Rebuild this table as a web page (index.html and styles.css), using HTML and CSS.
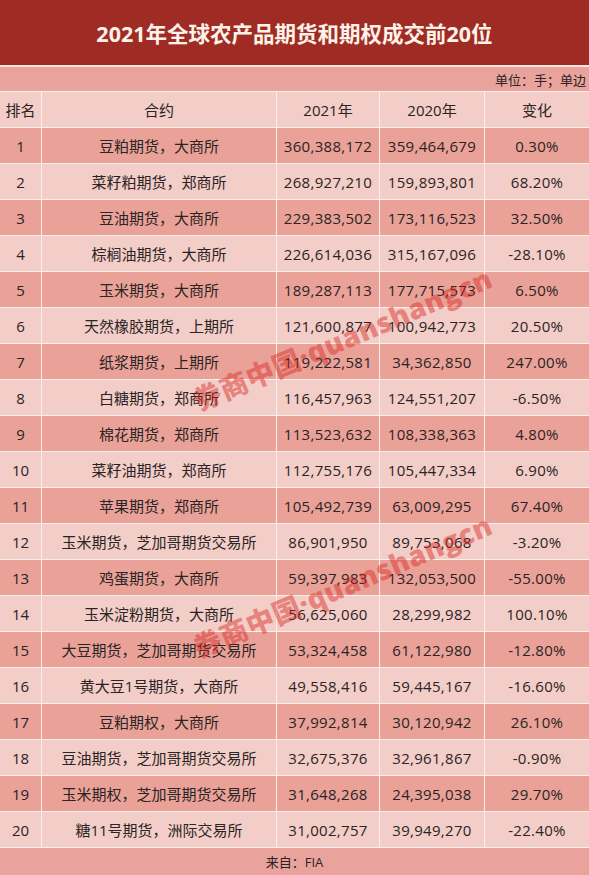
FILE: index.html
```html
<!DOCTYPE html>
<html>
<head>
  <meta charset="utf-8">
  <title>2021年全球农产品期货和期权成交前20位</title>
  <link rel="stylesheet" href="styles.css">
</head>
<body>
  <div class="sheet">
    <div class="title">2021年全球农产品期货和期权成交前20位</div>
    <div class="unit">单位：手；单边</div>

    <div class="board">
      <div class="row head">
        <div>排名</div><div>合约</div><div>2021年</div><div>2020年</div><div>变化</div>
      </div>
      <div class="row"><div>1</div><div>豆粕期货，大商所</div><div class="num">360,388,172</div><div class="num">359,464,679</div><div class="num">0.30%</div></div>
      <div class="row"><div>2</div><div>菜籽粕期货，郑商所</div><div class="num">268,927,210</div><div class="num">159,893,801</div><div class="num">68.20%</div></div>
      <div class="row"><div>3</div><div>豆油期货，大商所</div><div class="num">229,383,502</div><div class="num">173,116,523</div><div class="num">32.50%</div></div>
      <div class="row"><div>4</div><div>棕榈油期货，大商所</div><div class="num">226,614,036</div><div class="num">315,167,096</div><div class="num">-28.10%</div></div>
      <div class="row"><div>5</div><div>玉米期货，大商所</div><div class="num">189,287,113</div><div class="num">177,715,573</div><div class="num">6.50%</div></div>
      <div class="row"><div>6</div><div>天然橡胶期货，上期所</div><div class="num">121,600,877</div><div class="num">100,942,773</div><div class="num">20.50%</div></div>
      <div class="row"><div>7</div><div>纸浆期货，上期所</div><div class="num">119,222,581</div><div class="num">34,362,850</div><div class="num">247.00%</div></div>
      <div class="row"><div>8</div><div>白糖期货，郑商所</div><div class="num">116,457,963</div><div class="num">124,551,207</div><div class="num">-6.50%</div></div>
      <div class="row"><div>9</div><div>棉花期货，郑商所</div><div class="num">113,523,632</div><div class="num">108,338,363</div><div class="num">4.80%</div></div>
      <div class="row"><div>10</div><div>菜籽油期货，郑商所</div><div class="num">112,755,176</div><div class="num">105,447,334</div><div class="num">6.90%</div></div>
      <div class="row"><div>11</div><div>苹果期货，郑商所</div><div class="num">105,492,739</div><div class="num">63,009,295</div><div class="num">67.40%</div></div>
      <div class="row"><div>12</div><div>玉米期货，芝加哥期货交易所</div><div class="num">86,901,950</div><div class="num">89,753,068</div><div class="num">-3.20%</div></div>
      <div class="row"><div>13</div><div>鸡蛋期货，大商所</div><div class="num">59,397,983</div><div class="num">132,053,500</div><div class="num">-55.00%</div></div>
      <div class="row"><div>14</div><div>玉米淀粉期货，大商所</div><div class="num">56,625,060</div><div class="num">28,299,982</div><div class="num">100.10%</div></div>
      <div class="row"><div>15</div><div>大豆期货，芝加哥期货交易所</div><div class="num">53,324,458</div><div class="num">61,122,980</div><div class="num">-12.80%</div></div>
      <div class="row"><div>16</div><div>黄大豆1号期货，大商所</div><div class="num">49,558,416</div><div class="num">59,445,167</div><div class="num">-16.60%</div></div>
      <div class="row"><div>17</div><div>豆粕期权，大商所</div><div class="num">37,992,814</div><div class="num">30,120,942</div><div class="num">26.10%</div></div>
      <div class="row"><div>18</div><div>豆油期货，芝加哥期货交易所</div><div class="num">32,675,376</div><div class="num">32,961,867</div><div class="num">-0.90%</div></div>
      <div class="row"><div>19</div><div>玉米期权，芝加哥期货交易所</div><div class="num">31,648,268</div><div class="num">24,395,038</div><div class="num">29.70%</div></div>
      <div class="row"><div>20</div><div>糖11号期货，洲际交易所</div><div class="num">31,002,757</div><div class="num">39,949,270</div><div class="num">-22.40%</div></div>
    </div>

    <div class="source">来自：FIA</div>

    <!-- 水印 -->
    <div class="watermark wm-top">券商中国·quanshangcn</div>
    <div class="watermark wm-bottom">券商中国·quanshangcn</div>
  </div>
</body>
</html>
```

FILE: styles.css
```css
body {
  margin: 0;
  background: #fbefeb;
  font-family: "Open Sans", "Noto Sans CJK SC", sans-serif;
  color: #2a2424;
}

.sheet {
  position: relative;
  width: 589px;
  height: 875px;
  overflow: hidden;
  background: #fbefeb;
}

.title {
  height: 65px;
  display: flex;
  align-items: center;
  justify-content: center;
  background: #9e2c25;
  color: #fff2e8;
  font-size: 21.5px;
  font-weight: bold;
  border-bottom: 2px solid #f7e6e0;
}

.unit {
  height: 24px;
  display: flex;
  align-items: center;
  justify-content: flex-end;
  padding-right: 3px;
  background: #e9a39c;
  font-size: 13px;
}

.board {
  border-top: 1px solid #fbefeb;
}

.row {
  display: grid;
  grid-template-columns: 41px 234px 102px 104px 1fr;
  gap: 1px;
  margin-bottom: 1px;
  font-size: 15px;
}

.row > div {
  height: 35px;
  display: flex;
  align-items: center;
  justify-content: center;
  background: #f3cdc8;
  white-space: nowrap;
}

.row:nth-child(even) > div {
  background: #e9a198;
}

.row .num {
  letter-spacing: 0.3px;
}

.source {
  height: 27px;
  display: flex;
  align-items: center;
  justify-content: center;
  background: #e9a39c;
  font-size: 13px;
}

.watermark {
  position: absolute;
  transform: translate(-50%, -50%) rotate(-23deg);
  font-family: "Open Sans", "Noto Sans CJK SC", sans-serif;
  font-size: 28px;
  font-weight: 800;
  letter-spacing: 0.5px;
  color: rgba(215, 38, 30, 0.45);
  white-space: nowrap;
  pointer-events: none;
}

.wm-top {
  left: 342px;
  top: 338px;
}

.wm-bottom {
  left: 342px;
  top: 585px;
}
```
